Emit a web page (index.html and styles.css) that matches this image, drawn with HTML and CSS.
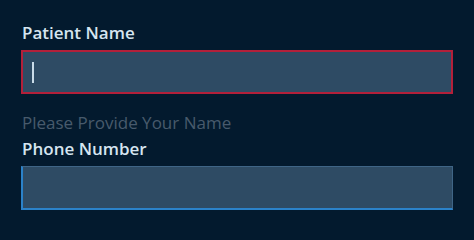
FILE: index.html
```html
<!DOCTYPE html>
<html>
<head>
<meta charset="utf-8">
<link rel="stylesheet" href="styles.css">
</head>
<body>
<div class="form">
  <div class="field">
    <label class="label">Patient Name</label>
    <div class="input input-error"><span class="caret"></span></div>
    <div class="hint">Please Provide Your Name</div>
  </div>
  <div class="field">
    <label class="label">Phone Number</label>
    <div class="input input-focus"></div>
  </div>
</div>
</body>
</html>
```

FILE: styles.css
```css
html, body {
  margin: 0;
  padding: 0;
  background: #031a2e;
  width: 474px;
  height: 232px;
  overflow: hidden;
}
.form {
  padding: 22px 21px 0 21px;
  font-family: "Open Sans", "Noto Sans", sans-serif;
  display: flex;
  flex-direction: column;
  width: 432px;
}
.field {
  display: flex;
  flex-direction: column;
}
.label {
  color: #d6e5f0;
  font-size: 17px;
  font-weight: 600;
  line-height: 22px;
  padding-left: 1px;
  margin-bottom: 6px;
}
.input {
  box-sizing: border-box;
  height: 44px;
  background: #2e4b64;
  display: flex;
  align-items: center;
}
.input-error {
  border: 2px solid #b3203a;
  padding-left: 9px;
}
.input-focus {
  border-top: 1px solid #3f6586;
  border-right: 1px solid #3f6586;
  border-left: 2px solid #2b82c9;
  border-bottom: 2px solid #2b82c9;
}
.caret {
  width: 2px;
  height: 21px;
  background: #c9dbe8;
}
.hint {
  color: #485a6c;
  font-size: 17px;
  line-height: 22px;
  margin-top: 18px;
  margin-bottom: 4px;
  padding-left: 1px;
}
```
